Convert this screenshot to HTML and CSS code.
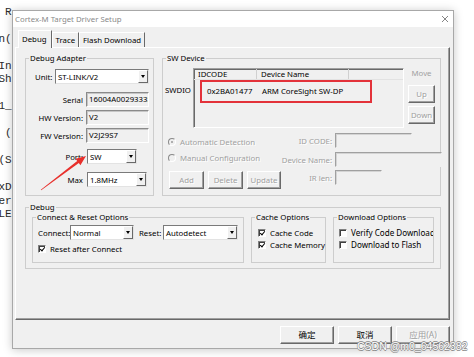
FILE: index.html
```html
<!DOCTYPE html>
<html lang="en">
  <head>
    <meta charset="UTF-8" />
    <title>Cortex-M Target Driver Setup</title>
    <link rel="stylesheet" href="styles.css">
  </head>
  <body>
    <div class="editor">
      <div class="code-line"> R</div>
      <div class="code-line"> </div>
      <div class="code-line">n(</div>
      <div class="code-line"> </div>
      <div class="code-line">In</div>
      <div class="code-line">Sh</div>
      <div class="code-line"> </div>
      <div class="code-line">1_</div>
      <div class="code-line"> </div>
      <div class="code-line"> (</div>
      <div class="code-line"> </div>
      <div class="code-line">(S</div>
      <div class="code-line"> </div>
      <div class="code-line">xD</div>
      <div class="code-line">er</div>
      <div class="code-line">LE</div>
    </div>

    <div class="dialog">
      <div class="titlebar">
        <span class="title">Cortex-M Target Driver Setup</span>
        <svg class="close" width="6" height="6" viewBox="0 0 6 6">
          <path d="M0 0L6 6M6 0L0 6" stroke="#777" stroke-width="0.9" />
        </svg>
      </div>
      <div class="client">
        <div class="tabs">
          <div class="tab active">Debug</div>
          <div class="tab">Trace</div>
          <div class="tab">Flash Download</div>
        </div>
        <div class="panel">
          <div class="top-row">
            <fieldset class="group adapter">
              <legend>Debug Adapter</legend>
              <div class="adapter-body">
                <div class="unit-row">
                  <span class="unit-label">Unit:</span>
                  <div class="select unit-select"><span>ST-LINK/V2</span><i class="drop"></i></div>
                </div>
                <div class="field-row serial-row">
                  <span class="field-label">Serial</span>
                  <div class="textbox">16004A002933353E</div>
                </div>
                <div class="field-row hw-row">
                  <span class="field-label">HW Version:</span>
                  <div class="textbox">V2</div>
                </div>
                <div class="field-row fw-row">
                  <span class="field-label">FW Version:</span>
                  <div class="textbox">V2J29S7</div>
                </div>
                <div class="field-row port-row">
                  <span class="field-label">Port:</span>
                  <div class="select port-select"><span>SW</span><i class="drop"></i></div>
                </div>
                <div class="field-row max-row">
                  <span class="field-label">Max</span>
                  <div class="select max-select"><span>1.8MHz</span><i class="drop"></i></div>
                </div>
              </div>
            </fieldset>

            <fieldset class="group device">
              <legend>SW Device</legend>
              <div class="device-body">
                <div class="device-top">
                  <span class="swdio">SWDIO</span>
                  <div class="listview">
                    <div class="lv-header">
                      <span class="lv-col1">IDCODE</span>
                      <span class="lv-col2">Device Name</span>
                    </div>
                    <div class="lv-row">
                      <span class="lv-id">0x2BA01477</span>
                      <span class="lv-name">ARM CoreSight SW-DP</span>
                    </div>
                    <div class="lv-mark"></div>
                  </div>
                  <div class="move-col">
                    <span class="move-label">Move</span>
                    <div class="btn disabled up-btn">Up</div>
                    <div class="btn disabled down-btn">Down</div>
                  </div>
                </div>
                <div class="device-bottom">
                  <div class="detect-col">
                    <div class="radio-row auto-row"><i class="radio on"></i><span>Automatic Detection</span></div>
                    <div class="radio-row manual-row"><i class="radio"></i><span>Manual Configuration</span></div>
                    <div class="action-row">
                      <div class="btn disabled add-btn">Add</div>
                      <div class="btn disabled add-btn">Delete</div>
                      <div class="btn disabled update-btn">Update</div>
                    </div>
                  </div>
                  <div class="id-col">
                    <div class="id-row"><span class="id-label">ID CODE:</span><div class="textbox off idcode-box"></div></div>
                    <div class="id-row name-row"><span class="id-label">Device Name:</span><div class="textbox off name-box"></div></div>
                    <div class="id-row ir-row"><span class="id-label">IR len:</span><div class="textbox off ir-box"></div></div>
                  </div>
                </div>
              </div>
            </fieldset>
          </div>

          <fieldset class="group debug">
            <legend>Debug</legend>
            <div class="debug-body">
              <fieldset class="group connect">
                <legend>Connect &amp; Reset Options</legend>
                <div class="connect-body">
                  <div class="connect-row">
                    <span class="connect-label">Connect:</span>
                    <div class="select connect-select"><span>Normal</span><i class="drop"></i></div>
                    <span class="reset-label">Reset:</span>
                    <div class="select reset-select"><span>Autodetect</span><i class="drop"></i></div>
                  </div>
                  <div class="check-row">
                    <i class="check on"></i><span>Reset after Connect</span>
                  </div>
                </div>
              </fieldset>
              <fieldset class="group cache">
                <legend>Cache Options</legend>
                <div class="cache-body">
                  <div class="check-row first"><i class="check on"></i><span>Cache Code</span></div>
                  <div class="check-row second"><i class="check on"></i><span>Cache Memory</span></div>
                </div>
              </fieldset>
              <fieldset class="group download">
                <legend>Download Options</legend>
                <div class="download-body">
                  <div class="check-row first"><i class="check"></i><span>Verify Code Download</span></div>
                  <div class="check-row second"><i class="check"></i><span>Download to Flash</span></div>
                </div>
              </fieldset>
            </div>
          </fieldset>
        </div>

        <div class="buttons">
          <div class="btn btn-cn">确定</div>
          <div class="btn btn-cn">取消</div>
          <div class="btn btn-cn disabled">应用(A)</div>
        </div>
      </div>
    </div>

    <svg class="arrow" width="474" height="357" viewBox="0 0 474 357">
      <polygon points="40.8,189.8 77.2,161 75.6,158.8 86,156 80.4,165.2 78.8,163 41.2,190.2" fill="#e8302c" />
    </svg>

    <div class="watermark">CSDN @m0_64562382</div>
  </body>
</html>
```

FILE: styles.css
```css
* {
  box-sizing: border-box;
}
body {
  margin: 0;
  width: 474px;
  height: 357px;
  overflow: hidden;
  position: relative;
  background: #fff;
  font-family: "Noto Sans", "Noto Sans CJK SC", sans-serif;
  font-size: 7.8px;
  line-height: 10px;
  color: #000;
}
.editor {
  padding-top: 6px;
  margin-left: -1.6px;
  font-family: "Liberation Mono", monospace;
  font-size: 11px;
  line-height: 13.47px;
  color: #2a2a2a;
}
.code-line {
  height: 13.47px;
  white-space: pre;
}

/* window */
.dialog {
  position: absolute;
  left: 12px;
  top: 10px;
  width: 442px;
  height: 339px;
  border: 1px solid #a8a8a8;
  background: #f0f0f0;
  box-shadow: 0 1px 9px rgba(0, 0, 0, 0.22);
  display: flex;
  flex-direction: column;
}
.titlebar {
  height: 16px;
  background: #fff;
  display: flex;
  align-items: center;
  justify-content: space-between;
  padding: 0 5px 0 2px;
  color: #8a8a8a;
}
.client {
  flex: 1;
  display: flex;
  flex-direction: column;
  padding: 3px 3px 0 2px;
}
.tabs {
  display: flex;
  align-items: flex-end;
  height: 17px;
  padding-left: 3px;
}
.tab {
  height: 15px;
  padding: 0 3px;
  border: 1px solid;
  border-color: #fff #696969 transparent #fff;
  border-bottom: none;
  display: flex;
  align-items: center;
}
.tab.active {
  height: 18px;
  margin-bottom: -1px;
  padding: 0 4px 2px 3px;
  position: relative;
  z-index: 1;
  background: #f0f0f0;
}
.panel {
  height: 273px;
  border: 1px solid;
  border-color: #fff #696969 #696969 #fff;
  box-shadow: inset -1px -1px 0 #a0a0a0;
  padding: 5px 8px 0 9px;
  display: flex;
  flex-direction: column;
}

/* group boxes */
.group {
  margin: 0;
  padding: 0;
  min-width: 0;
  border: 1px solid #cdcdcd;
}
.group legend {
  padding: 0 1px;
  margin-left: 3px;
  line-height: 10px;
}
.top-row {
  display: flex;
  gap: 8px;
  height: 143px;
}
.adapter {
  width: 129px;
}
.device {
  flex: 1;
}

/* controls */
.select {
  height: 15px;
  display: flex;
  align-items: center;
  background: #fff;
  border: 1px solid;
  border-color: #7a7a7a #e3e3e3 #e3e3e3 #7a7a7a;
}
.select span {
  flex: 1;
  padding-left: 2px;
  white-space: nowrap;
  overflow: hidden;
}
.drop {
  width: 10px;
  align-self: stretch;
  background: #f0f0f0;
  border: 1px solid;
  border-color: #fff #696969 #696969 #fff;
  display: flex;
  align-items: center;
  justify-content: center;
}
.drop::after {
  content: "";
  border-left: 2.5px solid transparent;
  border-right: 2.5px solid transparent;
  border-top: 3px solid #000;
}
.textbox {
  height: 15px;
  padding-left: 2px;
  line-height: 13px;
  background: #f0f0f0;
  border: 1px solid;
  border-color: #8a8a8a #fff #fff #8a8a8a;
  box-shadow: inset 1px 1px 0 #c6c6c6;
  white-space: nowrap;
  overflow: hidden;
}
.textbox.off {
  border-color: #a0a0a0 #f0f0f0 #f0f0f0 #a0a0a0;
  box-shadow: inset 1px 1px 0 #d4d4d4;
}
.btn {
  height: 18px;
  display: flex;
  align-items: center;
  justify-content: center;
  background: #f0f0f0;
  border: 1px solid;
  border-color: #fff #696969 #696969 #fff;
  box-shadow: inset -1px -1px 0 #a0a0a0;
}
.btn.disabled {
  color: #a0a0a0;
  text-shadow: 1px 1px 0 #fff;
}
.btn-cn {
  width: 54px;
  font-size: 8.5px;
}
.check {
  width: 8px;
  height: 8px;
  flex: none;
  background: #fff;
  border: 1px solid;
  border-color: #808080 #fff #fff #808080;
  box-shadow: inset 1px 1px 0 #404040;
  position: relative;
}
.check.on::after {
  content: "";
  position: absolute;
  left: 1.5px;
  top: 0;
  width: 2px;
  height: 4px;
  border: solid #000;
  border-width: 0 1.3px 1.3px 0;
  transform: rotate(40deg);
}
.radio {
  width: 8px;
  height: 8px;
  flex: none;
  border-radius: 50%;
  border: 1px solid;
  border-color: #8a8a8a #fff #fff #8a8a8a;
  display: flex;
  align-items: center;
  justify-content: center;
}
.radio.on::after {
  content: "";
  width: 2px;
  height: 2px;
  border-radius: 50%;
  background: #9a9a9a;
}

/* debug adapter */
.adapter-body {
  padding-top: 6px;
}
.unit-row {
  display: flex;
  align-items: center;
  height: 15px;
  padding-left: 9px;
}
.unit-label {
  width: 20px;
}
.unit-select {
  width: 94px;
}
.field-row {
  display: flex;
  align-items: center;
  gap: 3px;
  height: 15px;
}
.field-label {
  width: 57px;
  text-align: right;
  white-space: nowrap;
}
.field-row .textbox {
  width: 63px;
}
.serial-row {
  margin-top: 8px;
}
.hw-row,
.fw-row {
  margin-top: 3px;
}
.port-row {
  margin-top: 6px;
  gap: 4px;
}
.max-row {
  margin-top: 8px;
  gap: 4px;
}
.port-select {
  width: 50px;
}
.max-select {
  width: 60px;
}

/* sw device */
.device-body {
  padding: 5px 5px 0 2px;
}
.device-top {
  display: flex;
  align-items: flex-start;
  height: 60px;
}
.swdio {
  width: 28px;
  margin-top: 17px;
}
.listview {
  width: 211px;
  height: 60px;
  position: relative;
  background: #f0f0f0;
  border: 1px solid;
  border-color: #a0a0a0 #fff #fff #a0a0a0;
  box-shadow: inset 1px 1px 0 #696969;
}
.lv-header {
  display: flex;
  height: 11px;
  line-height: 11px;
  border-bottom: 1px solid #e2e2e2;
}
.lv-col1 {
  width: 63px;
  padding-left: 4px;
  border-right: 1px solid #d0d0d0;
}
.lv-col2 {
  width: 92px;
  padding-left: 4px;
  border-right: 1px solid #d0d0d0;
}
.lv-row {
  display: flex;
  margin-top: 6px;
  white-space: nowrap;
}
.lv-id {
  width: 63px;
  padding-left: 13px;
}
.lv-name {
  padding-left: 5px;
}
.lv-mark {
  position: absolute;
  left: 6px;
  top: 11px;
  width: 172px;
  height: 23px;
  border: 2px solid #e3323a;
}
.move-col {
  width: 27px;
  margin-left: 4px;
  display: flex;
  flex-direction: column;
}
.move-label {
  text-align: center;
  color: #a0a0a0;
}
.up-btn {
  margin-top: 7px;
}
.down-btn {
  margin-top: 3px;
}
.device-bottom {
  display: flex;
  justify-content: space-between;
  margin-top: 5px;
}
.detect-col {
  display: flex;
  flex-direction: column;
  padding-left: 3px;
  color: #a0a0a0;
}
.radio-row {
  display: flex;
  align-items: center;
  gap: 4px;
  height: 10px;
  white-space: nowrap;
  text-shadow: 1px 1px 0 #fff;
}
.auto-row {
  margin-top: 4px;
}
.manual-row {
  margin-top: 6px;
}
.action-row {
  display: flex;
  gap: 4px;
  margin-top: 8px;
  padding-left: 1px;
}
.add-btn {
  width: 35px;
}
.update-btn {
  width: 34px;
}
.id-col {
  display: flex;
  flex-direction: column;
}
.id-row {
  display: flex;
  align-items: center;
  gap: 3px;
  height: 15px;
}
.name-row {
  margin-top: 4px;
}
.ir-row {
  margin-top: 3px;
}
.id-label {
  width: 51px;
  text-align: right;
  white-space: nowrap;
  color: #a0a0a0;
  text-shadow: 1px 1px 0 #fff;
}
.idcode-box {
  width: 77px;
}
.name-box {
  width: 107px;
}
.ir-box {
  width: 47px;
}

/* debug options */
.debug {
  height: 67px;
  margin-top: 6px;
}
.debug-body {
  display: flex;
  gap: 7px;
  padding: 0 6px;
}
.connect {
  width: 212px;
  height: 51px;
}
.cache {
  width: 75px;
  height: 51px;
}
.download {
  width: 101px;
  height: 51px;
}
.connect-body {
  padding: 3px 0 0 5px;
}
.connect-row {
  display: flex;
  align-items: center;
  height: 15px;
}
.connect-label {
  width: 32px;
}
.connect-select {
  width: 64px;
}
.reset-label {
  width: 24px;
  margin-left: 5px;
}
.reset-select {
  width: 75px;
}
.check-row {
  display: flex;
  align-items: center;
  gap: 4px;
  height: 10px;
  margin-top: 4px;
  white-space: nowrap;
}
.cache-body {
  padding: 6px 0 0 6px;
}
.download-body {
  padding: 6px 0 0 5px;
  overflow: hidden;
  font-size: 8.1px;
}
.check-row.first {
  margin-top: 0;
}
.check-row.second {
  margin-top: 2px;
}

.buttons {
  display: flex;
  justify-content: flex-end;
  gap: 4px;
  margin-top: 6px;
}

/* overlays */
.arrow {
  position: absolute;
  left: 0;
  top: 0;
  pointer-events: none;
}
.watermark {
  position: absolute;
  left: 357px;
  top: 340px;
  font-family: "Liberation Sans", sans-serif;
  font-size: 10.5px;
  line-height: 12px;
  color: #fff;
  text-shadow: -0.6px 0 #8c8c8c, 0.6px 0 #8c8c8c, 0 -0.6px #8c8c8c, 0 0.6px #8c8c8c;
  white-space: nowrap;
}
```
